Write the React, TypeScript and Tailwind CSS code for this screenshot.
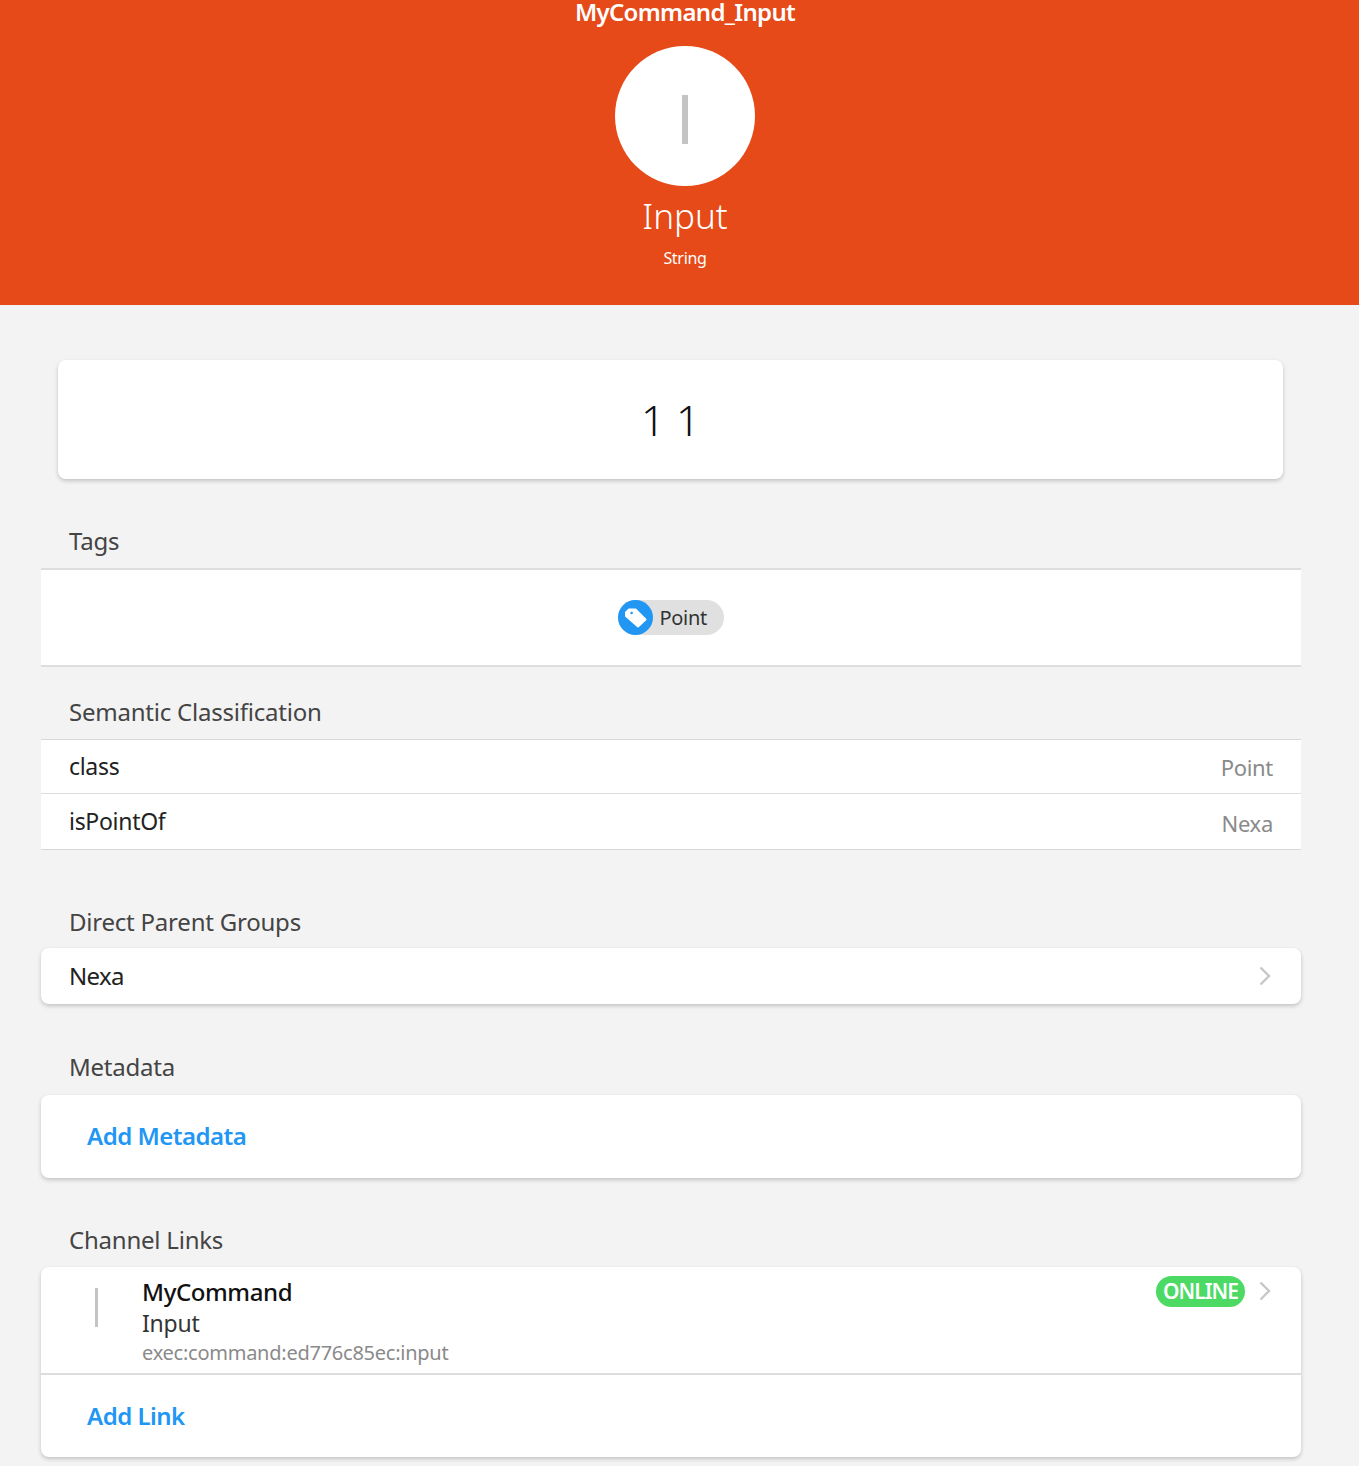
function SectionTitle({ children, className }: { children: string; className: string }) {
  return <div className={`pl-[69px] text-[24px] leading-[30px] tracking-[-0.22px] text-[#444444] ${className}`}>{children}</div>;
}

function Chevron() {
  return (
    <svg viewBox="0 0 12 20" className="h-[20px] w-[12px] fill-none stroke-[#c7c7c7] stroke-[2.4]">
      <path d="M1.5 1.5L10 10L1.5 18.5" />
    </svg>
  );
}

function TagIcon() {
  return (
    <svg viewBox="0 0 35 35" className="h-[35px] w-[35px]">
      <circle cx="17.5" cy="17.5" r="17.5" fill="#2196f3" />
      <path d="M11 9.5H17.5L27.5 19.5L20 26.5L8 16V12.5Z" fill="#ffffff" stroke="#ffffff" strokeWidth="2" strokeLinejoin="round" />
      <circle cx="13.6" cy="13" r="1.3" fill="#2196f3" />
    </svg>
  );
}

export default function App() {
  return (
    <div className="h-[1466px] overflow-hidden bg-[#f3f3f3] font-['Noto_Sans',sans-serif]">
      <header className="flex h-[305px] flex-col items-center bg-[#e64a19] pl-[11px] text-white">
        <div className="text-[24px] font-semibold leading-[24px] tracking-[-0.68px]">MyCommand_Input</div>
        <div className="mt-[22px] flex h-[140px] w-[140px] items-center justify-center rounded-full bg-white">
          <div className="mt-[6px] h-[49px] w-[6px] bg-[#c4c4c4]" />
        </div>
        <div className="mt-[8px] text-[35px] font-light leading-[44px]">Input</div>
        <div className="mt-[10px] text-[16px] leading-[20px] tracking-[-0.3px]">String</div>
      </header>

      <div className="mx-[58px] mt-[55px] flex h-[119px] w-[1225px] items-center justify-center rounded-lg bg-white text-[42px] font-light text-[#111111] shadow-[0_2px_4px_rgba(0,0,0,0.2)]">
        1 1
      </div>

      <div className="w-[1342px]">
        <SectionTitle className="mt-[47px]">Tags</SectionTitle>
        <div className="mx-[41px] mt-[12px] flex h-[99px] items-center justify-center border-y-2 border-[#dddddd] bg-white">
          <div className="flex h-[35px] items-center rounded-full bg-[#e0e0e0] pr-[17.5px]">
            <TagIcon />
            <span className="ml-[7px] mt-[1px] text-[20px] tracking-[-0.3px] text-[#333333]">Point</span>
          </div>
        </div>

        <SectionTitle className="mt-[30px]">Semantic Classification</SectionTitle>
        <div className="mx-[41px] mt-[12px] border-y border-[#d8d8d8] bg-white">
          <div className="flex h-[54px] items-center justify-between border-b border-[#dddddd] px-[28px]">
            <span className="text-[23px] tracking-[-0.3px] text-[#222222]">class</span>
            <span className="mt-[2px] text-[22px] tracking-[-0.3px] text-[#8a8a8a]">Point</span>
          </div>
          <div className="flex h-[55px] items-center justify-between px-[28px]">
            <span className="text-[23px] tracking-[-0.3px] text-[#222222]">isPointOf</span>
            <span className="mt-[3px] text-[22px] tracking-[-0.3px] text-[#8a8a8a]">Nexa</span>
          </div>
        </div>

        <SectionTitle className="mt-[57px]">Direct Parent Groups</SectionTitle>
        <div className="mx-[41px] mt-[11px] flex h-[56px] items-center justify-between rounded-lg bg-white pl-[28px] pr-[30px] shadow-[0_2px_4px_rgba(0,0,0,0.2)]">
          <span className="text-[24px] tracking-[-0.7px] text-[#222222]">Nexa</span>
          <Chevron />
        </div>

        <SectionTitle className="mt-[48px]">Metadata</SectionTitle>
        <div className="mx-[41px] mt-[13px] flex h-[83px] items-center rounded-lg bg-white pb-[2px] pl-[46px] shadow-[0_2px_4px_rgba(0,0,0,0.2)]">
          <span className="text-[24px] font-semibold tracking-[-0.5px] text-[#2196f3]">Add Metadata</span>
        </div>

        <SectionTitle className="mt-[47px]">Channel Links</SectionTitle>
        <div className="mx-[41px] mt-[12px] rounded-lg bg-white shadow-[0_2px_4px_rgba(0,0,0,0.2)]">
          <div className="flex h-[108px] border-b-2 border-[#dddddd] pr-[30px]">
            <div className="ml-[54px] mt-[21px] h-[39px] w-[3px] bg-[#c4c4c4]" />
            <div className="ml-[44px] flex-1 pt-[8px]">
              <div className="text-[24px] font-medium leading-[33px] tracking-[-0.4px] text-[#111111]">MyCommand</div>
              <div className="text-[23px] leading-[30px] tracking-[-0.2px] text-[#333333]">Input</div>
              <div className="mt-[1px] text-[20px] leading-[28px] tracking-[-0.25px] text-[#8a8a8a]">exec:command:ed776c85ec:input</div>
            </div>
            <div className="mt-[9px] flex h-[31px] items-center rounded-full bg-[#4cd964] px-[7px] text-[21px] font-semibold tracking-[-0.95px] text-white">ONLINE</div>
            <div className="ml-[14px] mt-[14px]"><Chevron /></div>
          </div>
          <div className="flex h-[82px] items-center pl-[46px]">
            <span className="text-[24px] font-semibold tracking-[-0.5px] text-[#2196f3]">Add Link</span>
          </div>
        </div>
      </div>
    </div>
  );
}
